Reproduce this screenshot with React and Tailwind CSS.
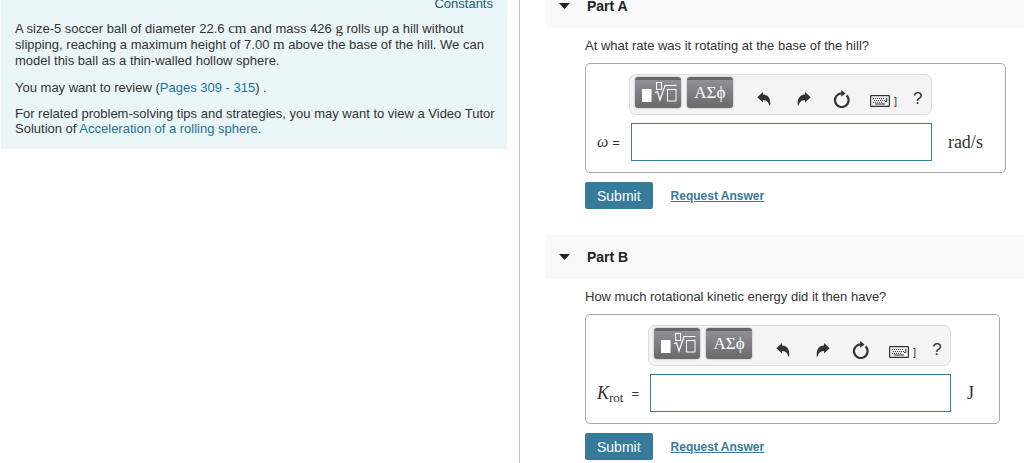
import React from "react";

function UndoIcon({ flipped = false }) {
  return (
    <svg
      viewBox="0 0 14 14"
      className={flipped ? "h-3.5 w-3.5 -scale-x-100" : "h-3.5 w-3.5"}
      fill="currentColor"
      aria-hidden="true"
    >
      <path d="M0.3 5.2 L6 0 V2.6 C11.2 2.8 13.9 6.4 13.2 13.6 C12.9 13.6 12.6 13.6 12.3 13.6 C11.6 9.8 9.8 8.2 6 8 V10.4 Z" />
    </svg>
  );
}

function ResetIcon() {
  return (
    <svg viewBox="0 0 17 18" className="h-[18px] w-[17px]" aria-hidden="true">
      <path
        d="M9 3.4 A6.8 6.8 0 1 0 13.6 5.4"
        fill="none"
        stroke="currentColor"
        strokeWidth="2.2"
      />
      <path d="M8.2 0 L12.6 3.4 L8.2 6.8 Z" fill="currentColor" />
    </svg>
  );
}

function KeyboardIcon() {
  return (
    <svg viewBox="0 0 20 12" className="h-3 w-5" fill="none" stroke="currentColor" aria-hidden="true">
      <rect x="0.6" y="0.6" width="18.8" height="10.8" rx="0.6" strokeWidth="1.2" />
      <path d="M3 3.5H15" strokeDasharray="1 1" />
      <path d="M4 5.5H15" strokeDasharray="1 1" />
      <path d="M3 7.3H13" strokeDasharray="1 1" />
      <path d="M16.8 3V6.5H15M5 9H15" />
    </svg>
  );
}

function TemplateIcon() {
  return (
    <svg viewBox="0 0 38 20" className="mb-1 h-5 w-[38px]" fill="none" stroke="#fff" aria-hidden="true">
      <rect x="3" y="7" width="9.5" height="13" fill="#fff" stroke="none" />
      <rect x="17.5" y="0.5" width="5" height="7" />
      <path d="M16 10.5 L18.5 9.8 L21 18 L26 3.5 H37.5" strokeWidth="1.2" />
      <rect x="28.5" y="7.5" width="8.5" height="11.5" />
    </svg>
  );
}

const padButton =
  "flex h-[31px] w-[46px] items-center justify-center rounded-[3px] border-t-[3px] border-[#67676a] bg-linear-to-b from-[#929097] to-[#69696b] text-white shadow-[0_0_2px_#999999]";

function Toolbar() {
  return (
    <div
      role="toolbar"
      aria-label="Equation tools"
      className="-ml-0.5 flex h-[41px] items-center rounded-[7px] border border-[#dcdcdc] bg-[#f4f4f4] pl-[5px] text-[#333]"
    >
      <div className="mb-1 flex gap-1.5">
        <button type="button" aria-label="Templates" className={padButton}>
          <TemplateIcon />
        </button>
        <button type="button" aria-label="Symbols" className={`${padButton} font-["Liberation_Serif",serif] text-[17px]/5`}>
          <span className="mb-0.5">ΑΣϕ</span>
        </button>
      </div>
      <div className="mt-2 ml-6 flex h-5 items-center">
        <button type="button" aria-label="Undo">
          <UndoIcon />
        </button>
        <button type="button" aria-label="Redo" className="ml-[26px]">
          <UndoIcon flipped />
        </button>
        <button type="button" aria-label="Reset" className="ml-[22px]">
          <ResetIcon />
        </button>
        <button type="button" aria-label="Keyboard shortcuts" className="mt-1 ml-5 flex items-center gap-1 text-[11px] leading-3">
          <KeyboardIcon />
          <span>]</span>
        </button>
        <button type="button" aria-label="Help" className="ml-4 text-[17px] leading-5">
          ?
        </button>
      </div>
    </div>
  );
}

function Part({ id, title, question, label, unit }) {
  return (
    <section>
      <h2 className="h-11 bg-[#f9f9f9] text-sm font-bold text-[#222]">
        <button type="button" aria-expanded="true" className="flex h-full w-full items-center pl-[13px]">
          <svg viewBox="0 0 11 6" className="mr-[17px] h-1.5 w-[11px]" fill="currentColor" aria-hidden="true">
            <path d="M0 0 H11 L5.5 6 Z" />
          </svg>
          {title}
        </button>
      </h2>
      <div className="pl-[39px]">
        <p className="pt-2.5 leading-4">{question}</p>
        <form className="mt-[9px]" onSubmit={(e) => e.preventDefault()}>
          <div className="grid w-fit grid-cols-[auto_301px_auto] gap-y-2 rounded-[5px] border border-[#a9a9a9] pt-2.5 pr-[22px] pb-[11px] pl-[11px]">
            <div className="col-start-2">
              <Toolbar />
            </div>
            <label htmlFor={id} className="col-start-1 flex items-center pr-[11px]">
              {label}
              <span className="pt-0.5">=</span>
            </label>
            <input
              id={id}
              type="text"
              className="h-[38px] w-full border border-[#367b9a] bg-white px-2 outline-none"
            />
            <span className='flex min-w-[26px] items-center pl-4 font-["Liberation_Serif",serif] text-[18px]'>
              {unit}
            </span>
          </div>
          <div className="mt-[9px] flex items-center gap-[18px]">
            <button type="submit" className="h-[27px] rounded-[2px] bg-[#367b9a] px-3 text-sm text-white">
              Submit
            </button>
            <a href="#answer" className="text-xs font-bold text-[#367b9a] underline">
              Request Answer
            </a>
          </div>
        </form>
      </div>
    </section>
  );
}

function Unit({ children }) {
  return <span className='font-["Liberation_Serif",serif] text-[15px] leading-none'>{children}</span>;
}

export default function App() {
  return (
    <main className='grid min-h-screen grid-cols-[520fr_504fr] overflow-hidden bg-white font-["Liberation_Sans",Arial,sans-serif] text-[13px] text-[#333]'>
      <div className="border-r border-[#b9bfca]">
        <div className="mr-3 ml-px bg-[#e9f5f7] pr-1.5 pb-[13px] pl-3.5">
          <div className="-mt-1 pr-2 pb-[9px] text-right leading-4">
            <a href="#constants" className="text-[#215b73]">
              Constants
            </a>
          </div>
          <div className="flex flex-col gap-[11px] leading-[15px]">
            <p className="leading-4">
              A size-5 soccer ball of diameter 22.6 <Unit>cm</Unit> and mass 426 <Unit>g</Unit> rolls up a hill
              without slipping, reaching a maximum height of 7.00 <Unit>m</Unit> above the base of the hill. We can
              model this ball as a thin-walled hollow sphere.
            </p>
            <p>
              You may want to review (
              <a href="#pages" className="text-[#237299]">
                Pages 309 - 315
              </a>
              ) .
            </p>
            <p>
              For related problem-solving tips and strategies, you may want to view a Video Tutor Solution of{" "}
              <a href="#video" className="text-[#237299]">
                Acceleration of a rolling sphere
              </a>
              .
            </p>
          </div>
        </div>
      </div>
      <div className="-mt-4 flex flex-col gap-[26px] pl-[26px]">
        <Part
          id="omega"
          title="Part A"
          question="At what rate was it rotating at the base of the hill?"
          label={<i className='mr-1 font-["Liberation_Serif",serif] text-base'>ω</i>}
          unit="rad/s"
        />
        <Part
          id="krot"
          title="Part B"
          question="How much rotational kinetic energy did it then have?"
          label={
            <span className='mr-2 font-["Liberation_Serif",serif] text-[18px]'>
              <i>K</i>
              <sub className="text-[13px]">rot</sub>
            </span>
          }
          unit="J"
        />
      </div>
    </main>
  );
}
